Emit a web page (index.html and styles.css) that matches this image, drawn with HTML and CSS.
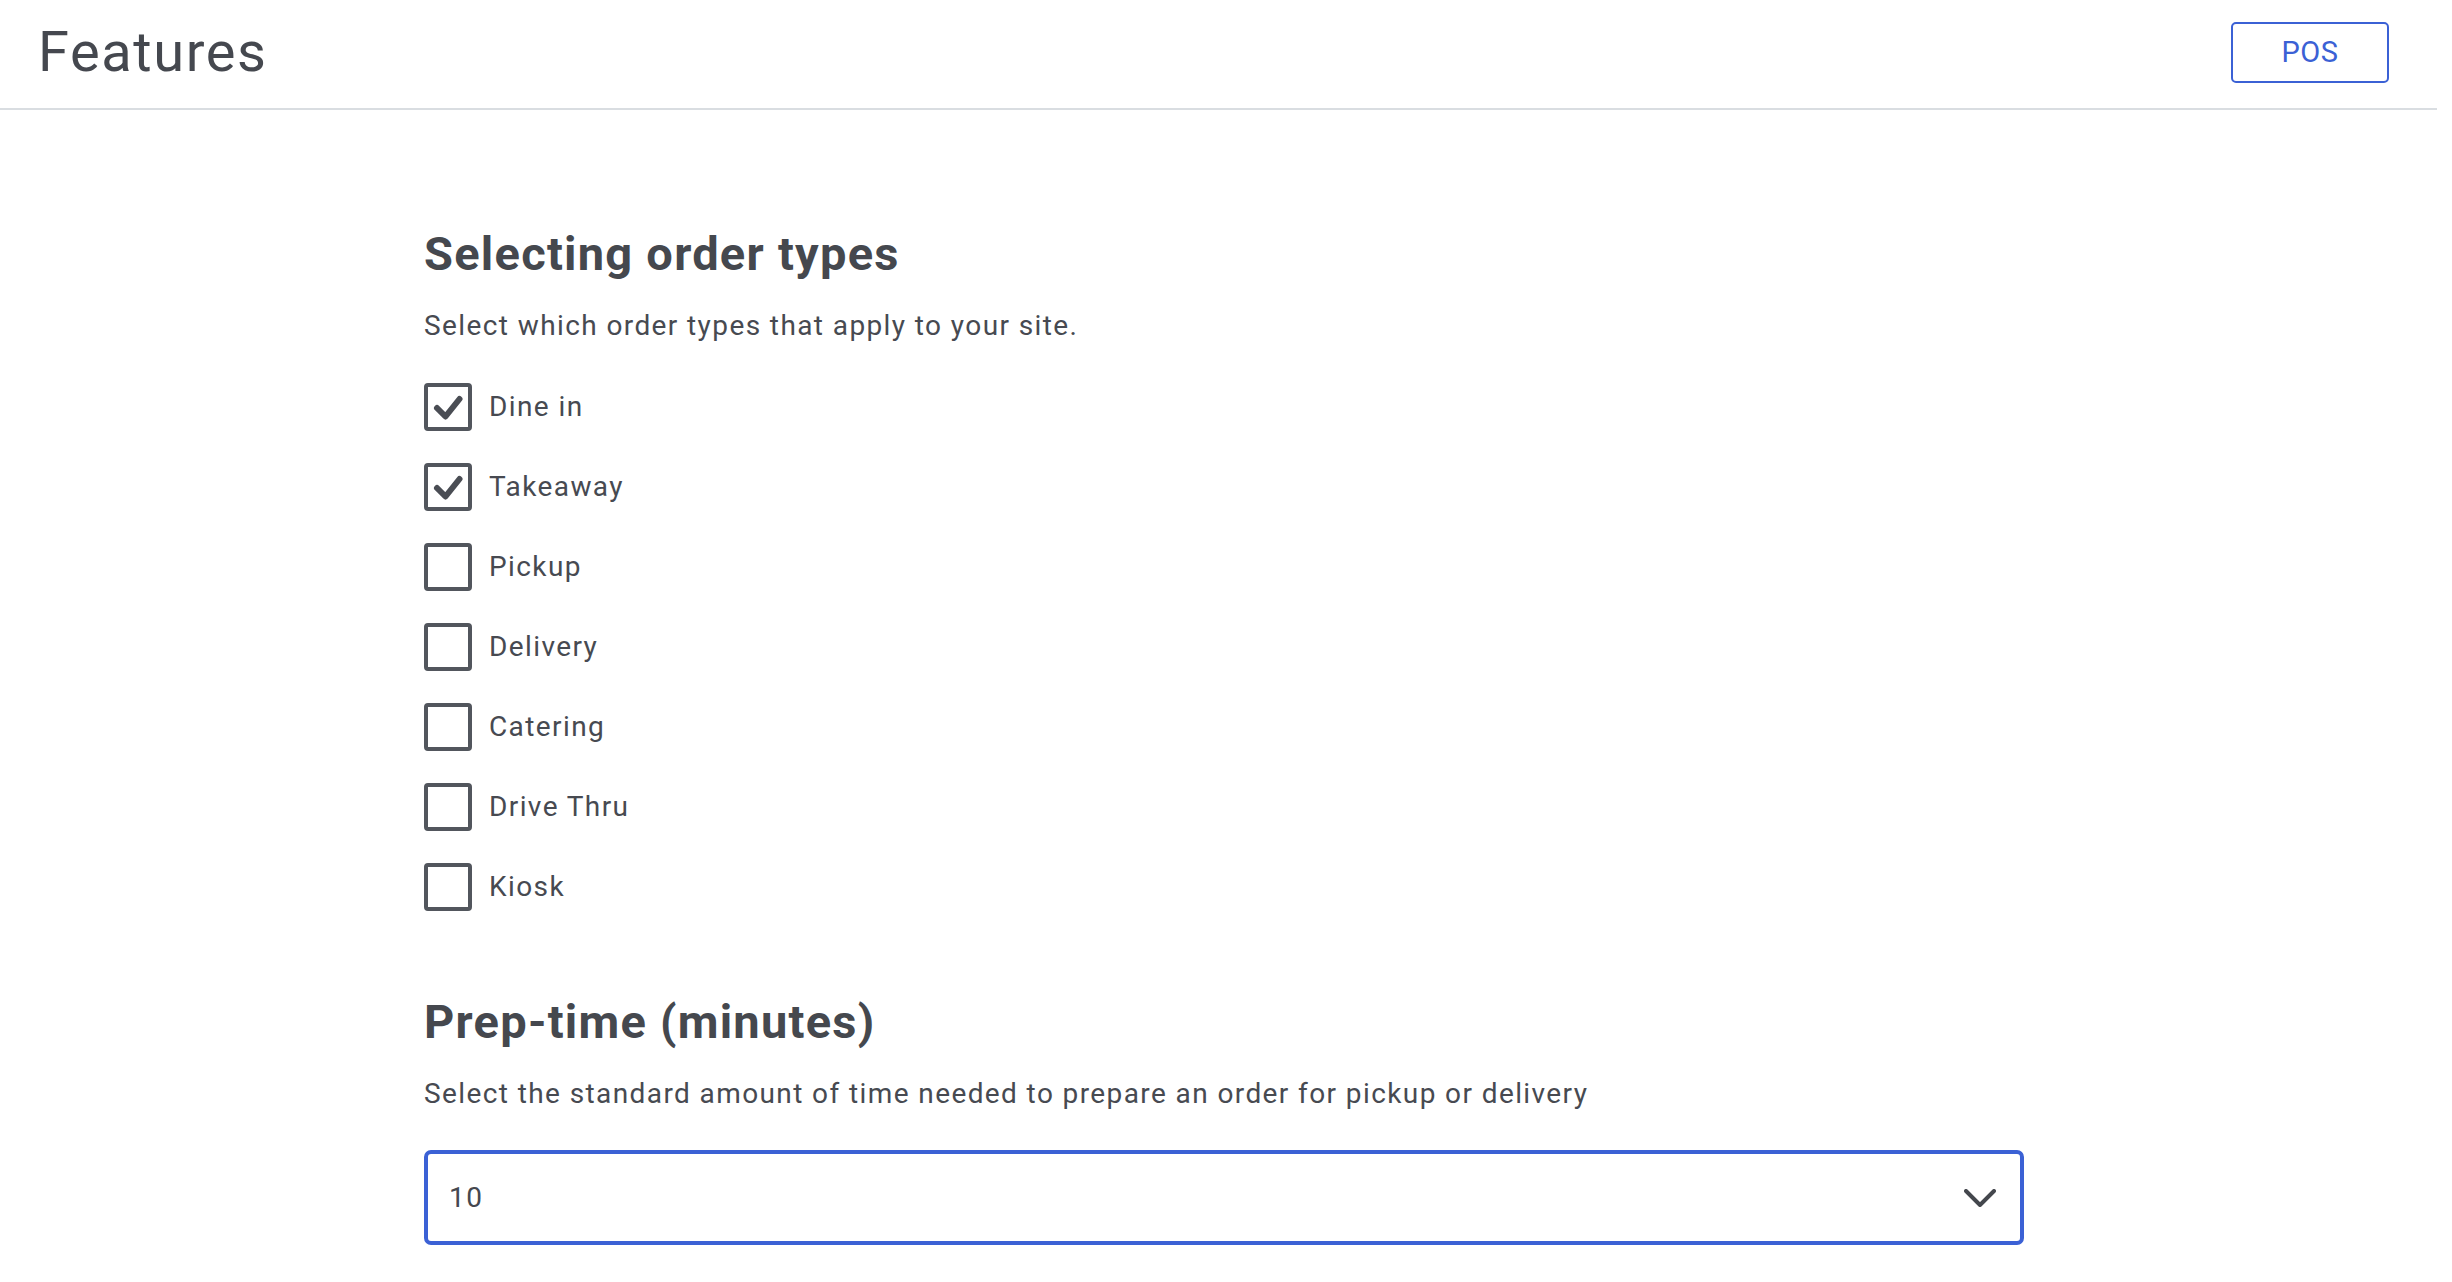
FILE: index.html
```html
<!DOCTYPE html>
<html lang="en">
<head>
<meta charset="utf-8">
<title>Features</title>
<link rel="stylesheet" href="styles.css">
</head>
<body>
<header class="topbar">
  <h1 class="page-title">Features</h1>
  <button class="pos-btn" type="button">POS</button>
</header>
<main class="content">
  <section class="section">
    <h2 class="section-title">Selecting order types</h2>
    <p class="section-desc">Select which order types that apply to your site.</p>
    <ul class="options">
      <li class="option"><span class="box checked"><svg viewBox="0 0 48 48" class="tick"><path d="M13 25 L21.5 33.5 L35.5 16"/></svg></span><span class="label">Dine in</span></li>
      <li class="option"><span class="box checked"><svg viewBox="0 0 48 48" class="tick"><path d="M13 25 L21.5 33.5 L35.5 16"/></svg></span><span class="label">Takeaway</span></li>
      <li class="option"><span class="box"></span><span class="label">Pickup</span></li>
      <li class="option"><span class="box"></span><span class="label">Delivery</span></li>
      <li class="option"><span class="box"></span><span class="label">Catering</span></li>
      <li class="option"><span class="box"></span><span class="label">Drive Thru</span></li>
      <li class="option"><span class="box"></span><span class="label">Kiosk</span></li>
    </ul>
  </section>
  <section class="section section-prep">
    <h2 class="section-title">Prep-time (minutes)</h2>
    <p class="section-desc">Select the standard amount of time needed to prepare an order for pickup or delivery</p>
    <div class="select" role="combobox" aria-expanded="false">
      <span class="select-value">10</span>
      <svg class="chevron" viewBox="0 0 32 18"><path d="M2 2 L16 16 L30 2"/></svg>
    </div>
  </section>
</main>
</body>
</html>
```
FILE: styles.css
```css
* { box-sizing: border-box; }
html, body { margin: 0; padding: 0; background: #ffffff; }
body {
  font-family: Roboto, "Liberation Sans", Arial, sans-serif;
  color: #474a51;
}
.topbar {
  display: flex;
  align-items: center;
  justify-content: space-between;
  height: 110px;
  padding: 0 48px 4px 38px;
  margin-right: 15px;
  border-bottom: 2px solid #d9dde1;
}
.page-title {
  margin: 0;
  font-size: 56px;
  line-height: 64px;
  font-weight: 400;
  letter-spacing: 1.6px;
  color: #45484f;
}
.pos-btn {
  width: 158px;
  height: 61px;
  border: 2px solid #3b61d5;
  border-radius: 5px;
  background: #fff;
  color: #3b61d5;
  font-family: Roboto, "Liberation Sans", Arial, sans-serif;
  font-size: 29px;
  font-weight: 400;
  letter-spacing: 0.5px;
  padding: 0;
}
.content {
  width: 1600px;
  margin: 0 0 0 calc(50% - 802px);
  padding-top: 116px;
}
.section-title {
  margin: 0;
  font-size: 47px;
  line-height: 56px;
  font-weight: 700;
  letter-spacing: 1.25px;
  color: #45484e;
}
.section-desc {
  margin: 24px 0 0;
  font-size: 28px;
  line-height: 40px;
  letter-spacing: 1.4px;
}
.options {
  list-style: none;
  margin: 37px 0 0;
  padding: 0;
  display: flex;
  flex-direction: column;
  gap: 32px;
}
.option {
  display: flex;
  align-items: center;
  gap: 17px;
  height: 48px;
}
.box {
  width: 48px;
  height: 48px;
  border: 4px solid #52565d;
  border-radius: 4px;
  flex: none;
  position: relative;
}
.tick {
  position: absolute;
  left: -4px;
  top: -4px;
  width: 48px;
  height: 48px;
  fill: none;
  stroke: #4a4d54;
  stroke-width: 6;
  stroke-linecap: round;
  stroke-linejoin: round;
}
.label {
  font-size: 28px;
  line-height: 40px;
  letter-spacing: 1.4px;
}
.section-prep { margin-top: 83px; }
.select {
  margin-top: 36px;
  height: 95px;
  border: 4px solid #3b61d5;
  border-radius: 7px;
  display: flex;
  align-items: center;
  justify-content: space-between;
  padding: 0 24px 0 21px;
}
.select-value {
  font-size: 28px;
  line-height: 40px;
  letter-spacing: 1.4px;
  color: #45484f;
}
.chevron {
  width: 32px;
  height: 18px;
  fill: none;
  stroke: #44474d;
  stroke-width: 4;
  stroke-linecap: round;
  stroke-linejoin: round;
}
```
